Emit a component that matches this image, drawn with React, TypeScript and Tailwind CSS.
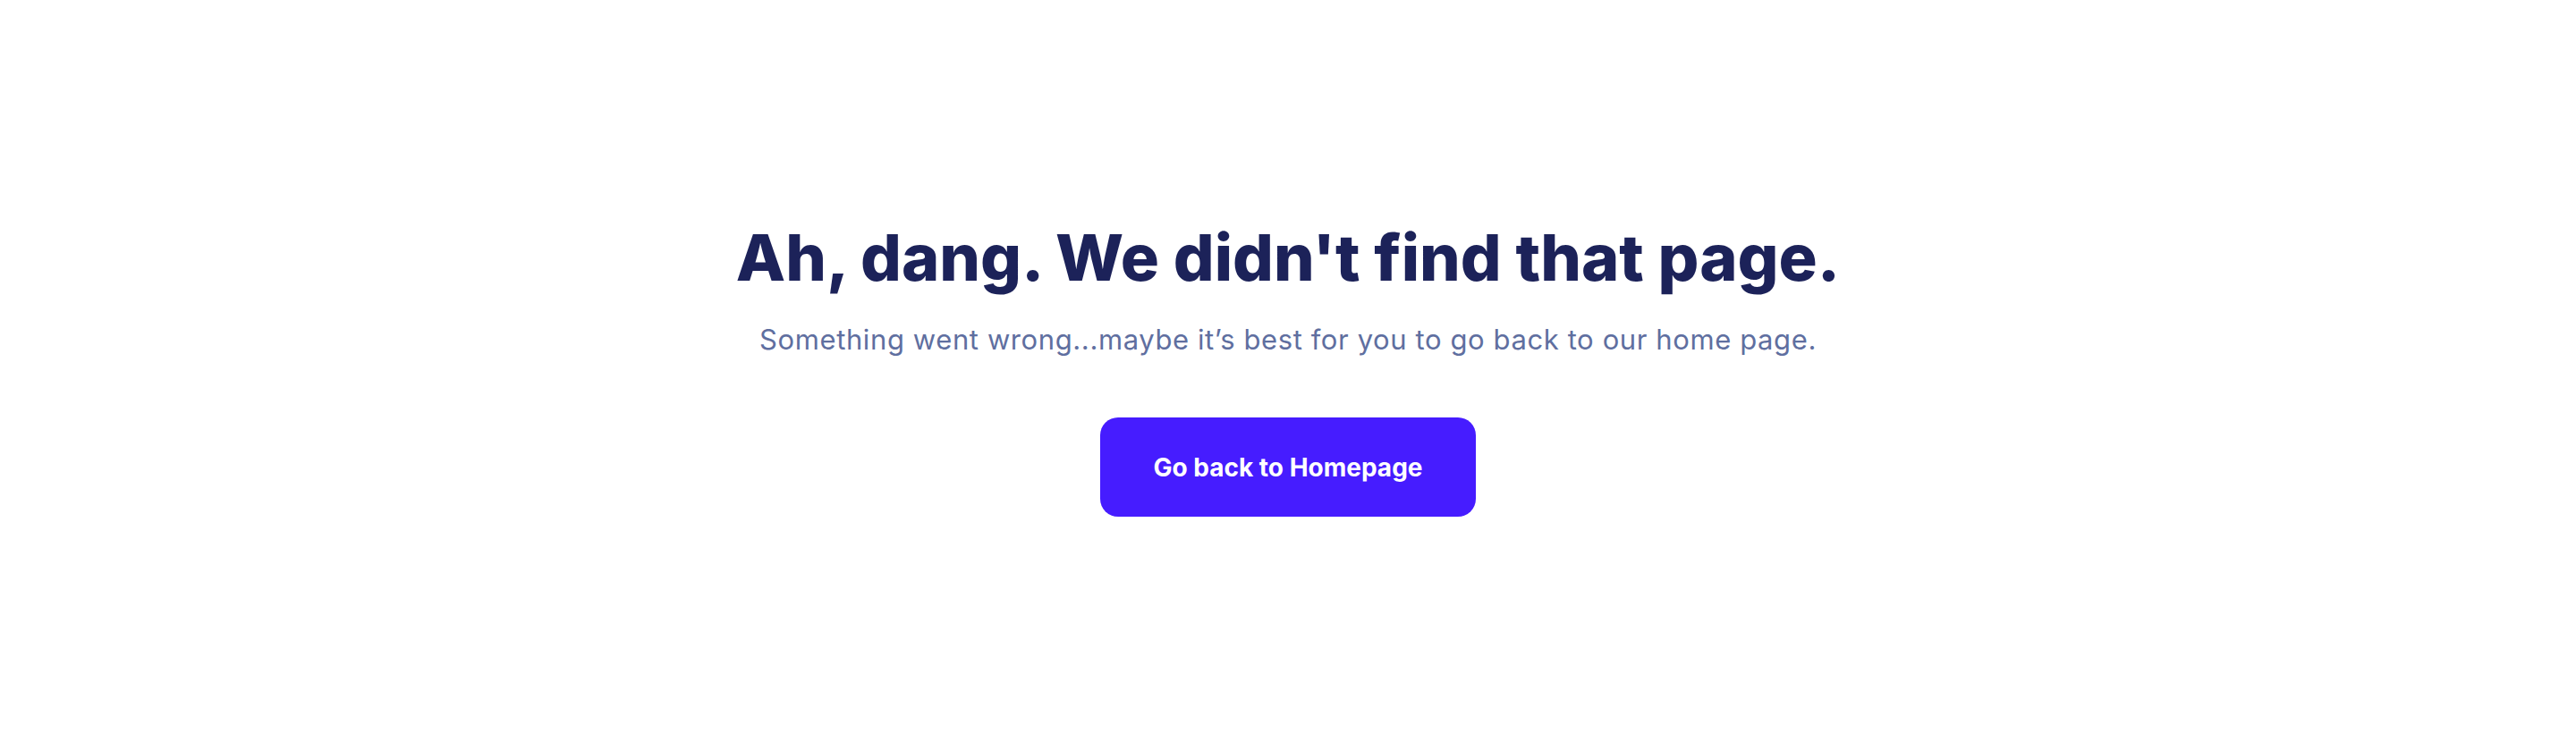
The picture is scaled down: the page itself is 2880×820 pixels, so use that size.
import React from "react";

export default function App() {
  return (
    <div className="flex h-[820px] w-full items-center justify-center bg-white" style={{ fontFamily: "Inter, 'Noto Sans', sans-serif" }}>
      <div className="flex flex-col items-center pt-[3px]">
        <h1 className="text-[72px] font-extrabold leading-[1.2] tracking-normal text-[#1c2259]">
          Ah, dang. We didn't find that page.
        </h1>
        <p className="mt-[29px] text-[31px] font-normal leading-[39px] tracking-[0.6px] text-[#5f6fa0]">
          Something went wrong...maybe it’s best for you to go back to our home page.
        </p>
        <a
          href="#"
          className="mt-[68px] flex h-[111px] w-[420px] items-center justify-center rounded-[20px] bg-[#461cff] text-[28px] font-bold text-white"
        >
          Go back to Homepage
        </a>
      </div>
    </div>
  );
}
